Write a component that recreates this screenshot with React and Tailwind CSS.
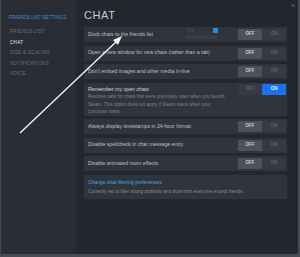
const font = { fontFamily: '"Liberation Sans", Arial, sans-serif' };

const sideItems = [
  { label: "FRIENDS LIST", active: false },
  { label: "CHAT", active: true },
  { label: "SIZE & SCALING", active: false },
  { label: "NOTIFICATIONS", active: false },
  { label: "VOICE", active: false },
];

function Toggle({ on }) {
  return (
    <div className="flex h-[11px] w-[48px] shrink-0 text-[4.5px] font-bold">
      <div className={`flex-1 flex items-center justify-center ${on ? "bg-[#363a43] text-[#5c616b]" : "bg-[#4b525d] text-[#c9cdd2]"}`}>OFF</div>
      <div className={`flex-1 flex items-center justify-center ${on ? "bg-[#1a72f0] text-[#e6efff]" : "bg-[#363a43] text-[#5c616b]"}`}>ON</div>
    </div>
  );
}

function Row({ label, on }) {
  return (
    <div className="flex h-[15px] items-center justify-between bg-[#30343c] pl-[4px] pr-[1px]">
      <span className="text-[5.2px] text-[#bcc0c5]">{label}</span>
      <Toggle on={on} />
    </div>
  );
}

export default function App() {
  return (
    <div className="relative flex h-[257px] w-[300px] bg-[#464b55] pl-[1px] pr-[2px] pb-[3px]" style={font}>
      {/* sidebar */}
      <div className="w-[75px] shrink-0 bg-[#2a2d35] pl-[8px] pt-[15px]">
        <div className="text-[4.6px] leading-[5px] text-[#3f8fdc] tracking-[0.1px]">FRIENDS LIST SETTINGS</div>
        <div className="mt-[9px] flex flex-col gap-[5.5px] pl-[1px]">
          {sideItems.map((s) => (
            <div key={s.label} className={`text-[4.6px] leading-[5px] tracking-[0.3px] ${s.active ? "text-[#e8eaec]" : "text-[#6c717a]"}`}>
              {s.label}
            </div>
          ))}
        </div>
      </div>

      {/* main */}
      <div className="relative flex-1 bg-[#24272e] pl-[8px] pr-[11px] pt-[10px]">
        <div className="absolute right-[3px] top-[1px] text-[7px] text-[#6d727a]">×</div>
        <div className="text-[11px] leading-[11px] tracking-[0.6px] text-[#c7ccd3]">CHAT</div>
        <div className="mt-[6px] flex flex-col gap-[3.5px]">
          <Row label="Dock chats to the friends list" on={false} />
          <Row label="Open a new window for new chats (rather than a tab)" on={false} />
          <Row label="Don't embed images and other media in-line" on={false} />
          <div className="flex h-[33px] justify-between bg-[#30343c] pl-[4px] pr-[1px] pt-[1px]">
            <div className="pt-[2px]">
              <div className="text-[5.2px] leading-[6px] text-[#d4d7db]">Remember my open chats</div>
              <div className="mt-[1.5px] whitespace-nowrap text-[4.6px] leading-[7.5px] text-[#7d838c]">
                Restores tabs for chats that were previously open when you launch
                <br />
                Steam. This option does not apply if Steam starts when your
                <br />
                computer starts.
              </div>
            </div>
            <Toggle on={true} />
          </div>
          <Row label="Always display timestamps in 24-hour format" on={false} />
          <Row label="Disable spellcheck in chat message entry" on={false} />
          <Row label="Disable animated room effects" on={false} />
          <div className="h-[24px] bg-[#30343c] pl-[4px] pt-[4px]">
            <div className="text-[5px] leading-[6px] text-[#4ea6e0]">Change chat filtering preferences</div>
            <div className="mt-[4px] text-[4.6px] leading-[6px] text-[#868b93]">
              Currently set to filter strong profanity and slurs from everyone except friends
            </div>
          </div>
        </div>
      </div>

      {/* watermark */}
      <div className="absolute left-[186px] top-[27px] text-[5px] leading-[7px] text-[#4c5159]">
        <div>The</div>
        <div>WindowsClub</div>
        <div className="absolute left-[27px] top-[1px] h-[5px] w-[5px] bg-[#1e8ee8]" />
      </div>

      {/* arrow */}
      <svg className="pointer-events-none absolute left-0 top-0" width="300" height="257" viewBox="0 0 300 257">
        <line x1="20" y1="133" x2="117" y2="41" stroke="#f2f2f2" strokeWidth="1.4" />
        <polygon points="122,36 113,40 118,45" fill="#f2f2f2" />
      </svg>
    </div>
  );
}
